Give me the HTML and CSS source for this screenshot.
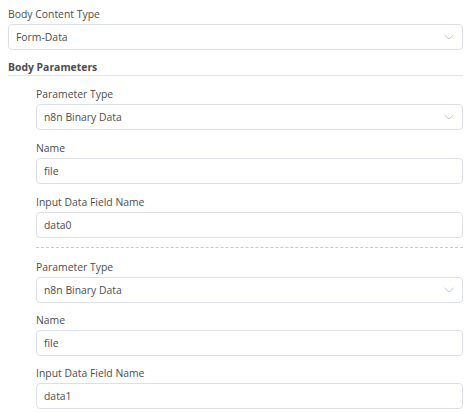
FILE: index.html
```html
<!DOCTYPE html>
<html>
<head>
  <meta charset="utf-8">
  <title>Body Parameters</title>
  <link rel="stylesheet" href="styles.css">
</head>
<body>
  <div class="params">
    <div class="field">
      <div class="field-label">Body Content Type</div>
      <div class="select">
        <span class="select-value">Form-Data</span>
        <svg class="chevron" width="12" height="8" viewBox="0 0 12 8"><path d="M1.5 2 L6 6 L10.5 2" fill="none" stroke="#c0c4cc" stroke-width="1"/></svg>
      </div>
    </div>

    <div class="section-title">Body Parameters</div>

    <div class="collection">
      <div class="collection-item">
        <div class="field">
          <div class="field-label">Parameter Type</div>
          <div class="select">
            <span class="select-value">n8n Binary Data</span>
            <svg class="chevron" width="12" height="8" viewBox="0 0 12 8"><path d="M1.5 2 L6 6 L10.5 2" fill="none" stroke="#c0c4cc" stroke-width="1"/></svg>
          </div>
        </div>
        <div class="field">
          <div class="field-label">Name</div>
          <div class="text-input">file</div>
        </div>
        <div class="field">
          <div class="field-label">Input Data Field Name</div>
          <div class="text-input">data0</div>
        </div>
      </div>

      <div class="collection-item">
        <div class="field">
          <div class="field-label">Parameter Type</div>
          <div class="select">
            <span class="select-value">n8n Binary Data</span>
            <svg class="chevron" width="12" height="8" viewBox="0 0 12 8"><path d="M1.5 2 L6 6 L10.5 2" fill="none" stroke="#c0c4cc" stroke-width="1"/></svg>
          </div>
        </div>
        <div class="field">
          <div class="field-label">Name</div>
          <div class="text-input">file</div>
        </div>
        <div class="field">
          <div class="field-label">Input Data Field Name</div>
          <div class="text-input">data1</div>
        </div>
      </div>
    </div>
  </div>
</body>
</html>
```

FILE: styles.css
```css
body {
    margin: 0;
    background: #fff;
    font-family: "Open Sans", sans-serif;
    font-size: 10.4px;
    color: #4d4d4d;
}

.params {
    padding: 4px 11px 0 8px;
}

/* 单个字段 */
.field {
    margin-bottom: 8px;
}

.field-label {
    line-height: 20px;
    color: #4d4d4d;
}

.select,
.text-input {
    display: flex;
    align-items: center;
    justify-content: space-between;
    height: 26px;
    padding: 0 7px 0 7px;
    border: 1px solid #dcdfe6;
    border-radius: 4px;
    box-sizing: border-box;
    background: #fff;
    color: #4d4d4d;
}

.chevron {
    flex-shrink: 0;
}

.section-title {
    font-weight: 700;
    line-height: 16px;
    margin-top: 9px;
    border-bottom: 1px solid #e4e4e4;
    margin-bottom: 8px;
}

/* 参数组 */
.collection {
    padding-left: 28px;
}

.collection-item {
    padding-bottom: 1px;
}

.collection-item + .collection-item {
    border-top: 1px dashed #c8c8c8;
    padding-top: 9px;
}

.collection-item + .collection-item .field {
    margin-bottom: 7px;
}
```
